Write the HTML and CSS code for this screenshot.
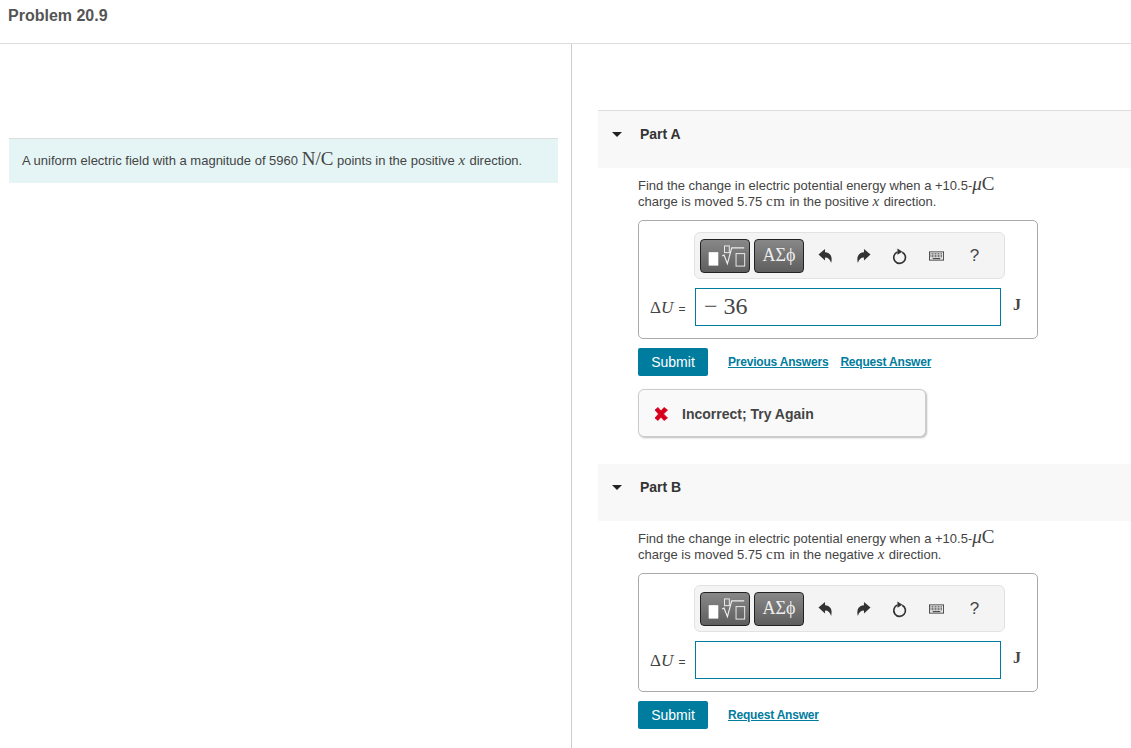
FILE: index.html
```html
<!DOCTYPE html>
<html lang="en">
<head>
    <meta charset="UTF-8">
    <title>Problem 20.9</title>
    <link rel="stylesheet" href="styles.css">
</head>
<body>
    <svg class="defs" width="0" height="0">
        <symbol id="icon-templates" viewBox="0 0 50 34">
            <rect x="8" y="13" width="10" height="14" fill="#fff"/>
            <rect x="24.500" y="6.500" width="5" height="7" fill="none" stroke="#eee"/>
            <path d="M22 17 L24 16 L27.500 25 L32 8.500 H45" fill="none" stroke="#eee" stroke-width="1.200"/>
            <rect x="36.500" y="14.500" width="9" height="13" fill="none" stroke="#eee"/>
        </symbol>
        <symbol id="icon-undo" viewBox="0 0 16 16">
            <path d="M0.500 6.500 L7.500 0.500 V4 C12.500 4.200 16 8 14 15.500 C13 11.500 11 9.500 7.500 9.500 V12.800 Z" fill="#333"/>
        </symbol>
        <symbol id="icon-redo" viewBox="0 0 16 16">
            <path d="M15.500 6.500 L8.500 0.500 V4 C3.500 4.200 0 8 2 15.500 C3 11.500 5 9.500 8.500 9.500 V12.800 Z" fill="#333"/>
        </symbol>
        <symbol id="icon-reset" viewBox="0 0 18 18">
            <path d="M6.500 4.300 A7 7 0 1 0 12.200 4.500" fill="none" stroke="#333" stroke-width="2"/>
            <path d="M6.500 0 L12.500 3.800 L6.500 7.500 Z" fill="#333"/>
        </symbol>
        <symbol id="icon-keyboard" viewBox="0 0 20 12">
            <rect x="0.500" y="0.500" width="19" height="11" fill="#e8e8e8" stroke="#222"/>
            <path d="M2 3 H18 M2 5 H18 M2 7 H18" stroke="#222" stroke-width="1" stroke-dasharray="1.300 0.700"/>
            <path d="M5 9.500 H15" stroke="#222" stroke-width="1.200"/>
        </symbol>
    </svg>

    <header class="page-header">Problem 20.9</header>

    <div class="columns">
        <section class="intro-col">
            <p class="intro">A uniform electric field with a magnitude of 5960 <span class="math-big">N/C</span> points in the positive <i class="math">x</i> direction.</p>
        </section>

        <main class="parts-col">
            <section class="part">
                <div class="part-head"><span class="caret"></span><h3>Part A</h3></div>
                <div class="part-body">
                    <p class="question">Find the change in electric potential energy when a +10.5-<i class="math-big">μ</i><span class="math-big">C</span><br>charge is moved 5.75 <span class="math">cm</span> in the positive <i class="math">x</i> direction.</p>
                    <div class="answer-box">
                        <div class="toolbar">
                            <button class="tool tool-tpl"><svg width="50" height="34"><use href="#icon-templates"/></svg></button>
                            <button class="tool tool-sym">ΑΣϕ</button>
                            <span class="ico ico-undo"><svg width="15" height="16"><use href="#icon-undo"/></svg></span>
                            <span class="ico ico-redo"><svg width="15" height="16"><use href="#icon-redo"/></svg></span>
                            <span class="ico ico-reset"><svg width="18" height="18"><use href="#icon-reset"/></svg></span>
                            <span class="ico ico-kbd"><svg width="20" height="12"><use href="#icon-keyboard"/></svg></span>
                            <span class="ico ico-help">?</span>
                        </div>
                        <div class="answer-row">
                            <span class="var"><span class="var-name">Δ<i>U</i></span> =</span>
                            <div class="answer-input">− 36</div>
                            <span class="unit">J</span>
                        </div>
                    </div>
                    <div class="actions">
                        <button class="btn">Submit</button>
                        <a class="link first" href="#">Previous Answers</a>
                        <a class="link" href="#">Request Answer</a>
                    </div>
                    <div class="feedback">
                        <svg width="16" height="14" viewBox="0 0 16 14"><path d="M2 3 L5 0.500 L8 4 L11 0.500 L14.500 3 L10.500 7 L14.500 11 L11 13.500 L8 10 L5 13.500 L2 11 L5.500 7 Z" fill="#d6001c" stroke="#d6001c" stroke-width="0.800" stroke-linejoin="round"/></svg>
                        <span>Incorrect; Try Again</span>
                    </div>
                </div>
            </section>

            <section class="part part-b">
                <div class="part-head"><span class="caret"></span><h3>Part B</h3></div>
                <div class="part-body">
                    <p class="question">Find the change in electric potential energy when a +10.5-<i class="math-big">μ</i><span class="math-big">C</span><br>charge is moved 5.75 <span class="math">cm</span> in the negative <i class="math">x</i> direction.</p>
                    <div class="answer-box">
                        <div class="toolbar">
                            <button class="tool tool-tpl"><svg width="50" height="34"><use href="#icon-templates"/></svg></button>
                            <button class="tool tool-sym">ΑΣϕ</button>
                            <span class="ico ico-undo"><svg width="15" height="16"><use href="#icon-undo"/></svg></span>
                            <span class="ico ico-redo"><svg width="15" height="16"><use href="#icon-redo"/></svg></span>
                            <span class="ico ico-reset"><svg width="18" height="18"><use href="#icon-reset"/></svg></span>
                            <span class="ico ico-kbd"><svg width="20" height="12"><use href="#icon-keyboard"/></svg></span>
                            <span class="ico ico-help">?</span>
                        </div>
                        <div class="answer-row">
                            <span class="var"><span class="var-name">Δ<i>U</i></span> =</span>
                            <div class="answer-input"></div>
                            <span class="unit">J</span>
                        </div>
                    </div>
                    <div class="actions">
                        <button class="btn">Submit</button>
                        <a class="link first" href="#">Request Answer</a>
                    </div>
                </div>
            </section>
        </main>
    </div>
</body>
</html>
```

FILE: styles.css
```css
:root {
    --teal: #007c9e;
    --text-color: #444;
    --line-color: #ddd;
}

* {
    box-sizing: border-box;
    margin: 0;
    padding: 0;
}

html, body {
    height: 748px;
    overflow: hidden;
}

body {
    font-family: 'Liberation Sans', Arial, sans-serif;
    font-size: 13px;
    color: var(--text-color);
    background: #fff;
}

.defs {
    position: absolute;
}

.page-header {
    height: 44px;
    padding: 7px 0 0 8px;
    border-bottom: 1px solid var(--line-color);
    font-size: 16px;
    font-weight: bold;
    line-height: 17px;
    color: #555;
}

.columns {
    display: flex;
    height: 704px;
}

.intro-col {
    width: 572px;
    padding: 94px 13px 0 9px;
    border-right: 1px solid #ccc;
}

.intro {
    height: 45px;
    padding-left: 13px;
    border-top: 1px solid #ddd;
    background: #e5f5f6;
    line-height: 43px;
    white-space: nowrap;
}

.math {
    font-family: 'Liberation Serif', serif;
    font-size: 15px;
    letter-spacing: 0.8px;
    line-height: 12px;
}

.math-big {
    font-family: 'Liberation Serif', serif;
    font-size: 19px;
    line-height: 12px;
}

.parts-col {
    flex: 1;
    padding: 66px 0 0 26px;
}

.part-head {
    display: flex;
    height: 58px;
    padding: 15px 0 0 14px;
    border-top: 1px solid var(--line-color);
    background: #f8f8f8;
}

.part-b {
    margin-top: 27px;
}

.part-b .part-head {
    height: 57px;
    border-top: 0;
}

.caret {
    width: 0;
    height: 0;
    margin: 6px 17px 0 0;
    border-left: 5.500px solid transparent;
    border-right: 5.500px solid transparent;
    border-top: 5.500px solid #222;
}

h3 {
    margin-left: 1px;
    font-size: 14px;
    font-weight: bold;
    line-height: 17px;
    color: #333;
}

.part-body {
    padding: 10px 0 0 40px;
}

.question {
    height: 32px;
    line-height: 16px;
    white-space: nowrap;
}

.answer-box {
    width: 400px;
    height: 119px;
    margin-top: 10px;
    padding-top: 11px;
    border: 1px solid #aaa;
    border-radius: 5px;
}

.toolbar {
    display: flex;
    align-items: center;
    width: 311px;
    height: 47px;
    margin-left: 55px;
    padding-left: 5px;
    border: 1px solid #e2e2e2;
    border-radius: 6px;
    background: #f4f4f4;
}

.tool {
    display: flex;
    align-items: center;
    justify-content: center;
    height: 34px;
    border: 1px solid #222;
    border-radius: 4px;
    background: linear-gradient(#888, #5e5e5e);
    color: #eee;
    overflow: hidden;
}

.tool-tpl {
    width: 50px;
}

.tool-sym {
    width: 50px;
    margin-left: 4px;
    font-family: 'Liberation Serif', 'DejaVu Serif', serif;
    font-size: 18px;
}

.ico {
    display: flex;
    justify-content: center;
    width: 15px;
}

.ico-undo {
    margin-left: 14px;
}

.ico-redo {
    margin-left: 23px;
}

.ico-reset {
    margin-left: 21px;
}

.ico-kbd {
    margin-left: 22px;
}

.ico-help {
    margin-left: 23px;
    font-size: 17px;
    color: #444;
}

.answer-row {
    display: flex;
    align-items: center;
    height: 38px;
    margin-top: 9px;
}

.var {
    width: 56px;
    padding: 1px 0 0 11px;
    font-size: 12px;
    white-space: nowrap;
}

.var-name {
    margin-right: 2px;
    font-family: 'Liberation Serif', serif;
    font-size: 17px;
}

.answer-input {
    width: 306px;
    height: 38px;
    padding-left: 8px;
    border: 1px solid var(--teal);
    font-family: 'Liberation Serif', serif;
    font-size: 24px;
    line-height: 34px;
    color: #444;
}

.unit {
    margin: -4px 0 0 12px;
    font-family: 'Liberation Serif', serif;
    font-size: 16px;
    font-weight: bold;
    color: #444;
}

.actions {
    display: flex;
    align-items: center;
    margin-top: 9px;
}

.btn {
    width: 70px;
    height: 28px;
    border: none;
    border-radius: 2px;
    background: var(--teal);
    color: #fff;
    font-family: inherit;
    font-size: 14px;
}

.link {
    margin: -1px 0 0 12px;
    color: var(--teal);
    font-size: 12px;
    font-weight: bold;
    letter-spacing: -0.2px;
}

.link.first {
    margin-left: 20px;
}

.feedback {
    display: flex;
    align-items: center;
    gap: 13px;
    width: 288px;
    height: 48px;
    margin-top: 13px;
    padding: 1px 0 0 14px;
    border: 1px solid #ccc;
    border-radius: 6px;
    background: #f9f9f9;
    box-shadow: 1px 1px 2px #bbb;
    font-size: 14px;
    font-weight: bold;
}
```
